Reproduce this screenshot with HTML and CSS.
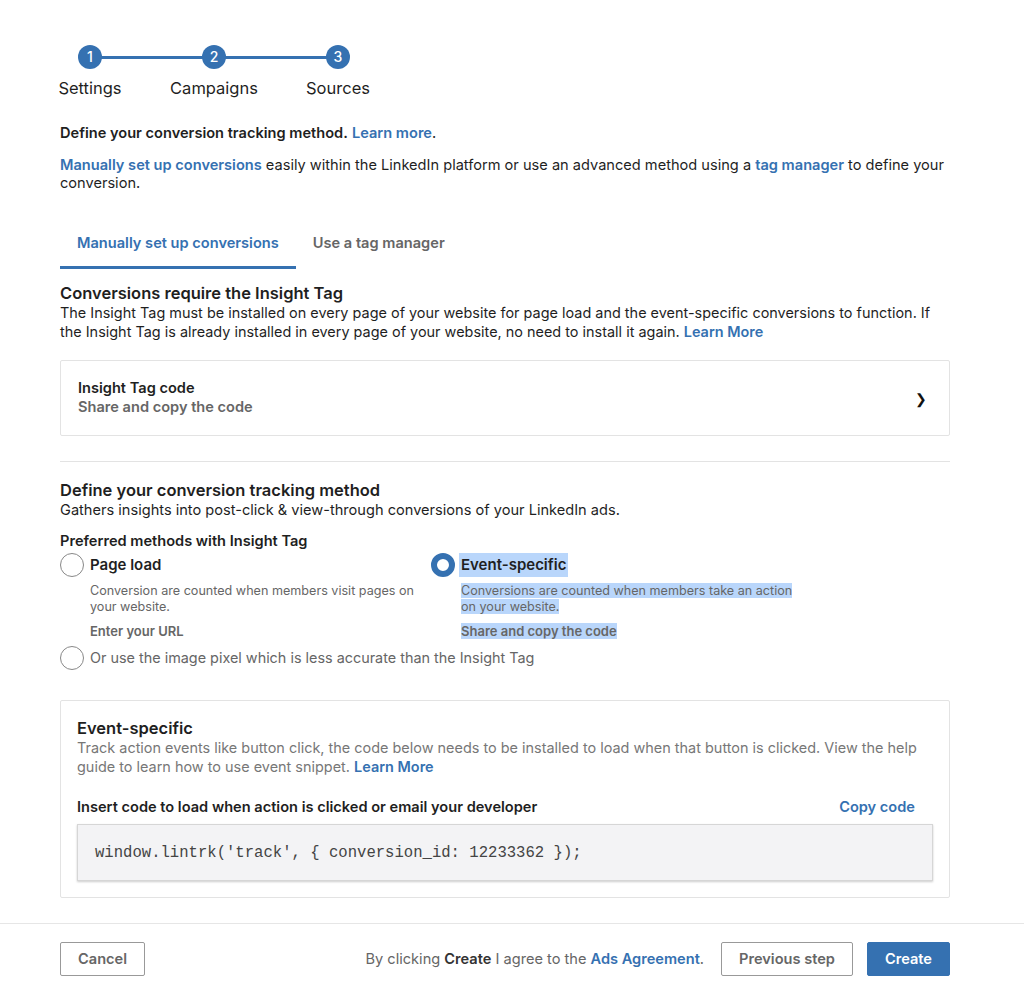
FILE: index.html
```html
<!DOCTYPE html>
<html>

<head>
    <title>Conversion tracking</title>
    <link rel="stylesheet" href="styles.css">
</head>

<body>
    <div class="page">
        <ol class="stepper">
            <li class="step"><span class="step-dot">1</span><span class="step-label">Settings</span></li>
            <li class="step"><span class="step-dot">2</span><span class="step-label">Campaigns</span></li>
            <li class="step"><span class="step-dot">3</span><span class="step-label">Sources</span></li>
        </ol>

        <p class="intro"><strong>Define your conversion tracking method.</strong> <a href="#">Learn more</a>.</p>
        <p class="lead"><a href="#">Manually set up conversions</a> easily within the LinkedIn platform or use an advanced method using a <a href="#">tag manager</a> to define your conversion.</p>

        <div class="tabs">
            <span class="tab active">Manually set up conversions</span>
            <span class="tab">Use a tag manager</span>
        </div>

        <section class="insight">
            <h3>Conversions require the Insight Tag</h3>
            <p class="insight-text">The Insight Tag must be installed on every page of your website for page load and the event-specific conversions to function. If the Insight Tag is already installed in every page of your website, no need to install it again. <a href="#">Learn More</a></p>
        </section>

        <div class="tag-card">
            <div>
                <div class="tag-title">Insight Tag code</div>
                <div class="tag-sub">Share and copy the code</div>
            </div>
            <span class="chevron">&#x276F;</span>
        </div>

        <hr class="divider">

        <section class="method">
            <h3>Define your conversion tracking method</h3>
            <p class="method-text">Gathers insights into post-click &amp; view-through conversions of your LinkedIn ads.</p>
            <div class="method-label">Preferred methods with Insight Tag</div>

            <div class="options">
                <div class="option">
                    <div class="option-head"><span class="radio"></span><span class="option-title">Page load</span></div>
                    <p class="option-desc">Conversion are counted when members visit pages on your website.</p>
                    <div class="option-link">Enter your URL</div>
                </div>
                <div class="option">
                    <div class="option-head"><span class="radio checked"></span><span class="option-title sel">Event-specific</span></div>
                    <p class="option-desc"><span class="sel">Conversions are counted when members take an action on your website.</span></p>
                    <div class="option-link"><span class="sel">Share and copy the code</span></div>
                </div>
            </div>

            <div class="option-head pixel"><span class="radio"></span><span>Or use the image pixel which is less accurate than the Insight Tag</span></div>
        </section>

        <div class="event-card">
            <h3>Event-specific</h3>
            <p class="event-text">Track action events like button click, the code below needs to be installed to load when that button is clicked. View the help guide to learn how to use event snippet. <a href="#">Learn More</a></p>
            <div class="code-head">
                <strong>Insert code to load when action is clicked or email your developer</strong>
                <a href="#">Copy code</a>
            </div>
            <pre class="code">window.lintrk('track', { conversion_id: 12233362 });</pre>
        </div>
    </div>

    <footer class="footer">
        <button class="btn">Cancel</button>
        <span class="agree">By clicking <strong>Create</strong> I agree to the <a href="#">Ads Agreement</a>.</span>
        <button class="btn">Previous step</button>
        <button class="btn primary">Create</button>
    </footer>
</body>

</html>
```

FILE: styles.css
```css
body {
    margin: 0;
    font-family: Inter, "Liberation Sans", Arial, sans-serif;
    font-size: 14.6px;
    color: #1f1f1f;
    background: #fff;
}

a {
    color: #3571b1;
    text-decoration: none;
    font-weight: 600;
}

strong {
    font-weight: 600;
}

p {
    margin: 0;
}

h3 {
    margin: 0;
    font-size: 16.5px;
    font-weight: 600;
    line-height: 20px;
}

.page {
    padding: 45px 74px 0 60px;
}

/* stepper */
.stepper {
    position: relative;
    display: flex;
    list-style: none;
    margin: 0 0 0 -32px;
    padding: 0;
}

.stepper::before {
    content: "";
    position: absolute;
    left: 62px;
    width: 247px;
    top: 11px;
    height: 3px;
    background: #3571b1;
}

.step {
    width: 124px;
    display: flex;
    flex-direction: column;
    align-items: center;
}

.step-dot {
    position: relative;
    width: 24px;
    height: 24px;
    border-radius: 50%;
    background: #3571b1;
    color: #fff;
    font-size: 14px;
    font-weight: 500;
    line-height: 24px;
    text-align: center;
}

.step-label {
    margin-top: 9px;
    font-size: 16.5px;
    line-height: 20px;
}

.intro {
    margin-top: 26px;
    line-height: 18px;
}

.lead {
    margin-top: 14px;
    line-height: 18px;
}

/* tabs */
.tabs {
    display: flex;
    margin-top: 42px;
}

.tab {
    padding: 0 17px 14px;
    border-bottom: 3px solid transparent;
    color: #666;
    font-weight: 600;
    line-height: 18px;
}

.tab.active {
    color: #3571b1;
    border-bottom-color: #3571b1;
}

.insight {
    margin-top: 14px;
}

.insight-text {
    font-size: 14.45px;
    line-height: 19px;
}

.tag-card {
    margin-top: 19px;
    height: 74px;
    padding: 0 22px 0 17px;
    border: 1px solid #e3e3e3;
    border-radius: 2px;
    display: flex;
    align-items: center;
    justify-content: space-between;
}

.tag-title {
    font-weight: 600;
    line-height: 19px;
}

.tag-sub {
    color: #666;
    font-weight: 600;
    line-height: 19px;
}

.chevron {
    font-size: 14px;
    color: #111;
}

.divider {
    margin: 25px 0 0;
    border: 0;
    border-top: 1px solid #e3e3e3;
}

.method {
    margin-top: 18px;
}

.method-text {
    line-height: 20px;
}

.method-label {
    margin-top: 11px;
    font-weight: 600;
    line-height: 20px;
}

.options {
    display: flex;
    margin-top: 2px;
}

.option {
    width: 371px;
}

.option-head {
    display: flex;
    align-items: center;
    gap: 4px;
    line-height: 24px;
}

.radio {
    width: 22px;
    height: 22px;
    border: 1px solid #888;
    border-radius: 50%;
    flex: none;
}

.radio.checked {
    width: 12px;
    height: 12px;
    border: 6px solid #3571b1;
}

.option-title {
    font-size: 15px;
    font-weight: 600;
    padding: 0 2px;
}

.option-desc {
    margin: 6px 0 0 30px;
    font-size: 12.6px;
    line-height: 16px;
    color: #666;
    width: 340px;
}

.option-link {
    margin: 8px 0 0 30px;
    font-size: 13px;
    font-weight: 600;
    color: #666;
    line-height: 16px;
}

.sel {
    background: #b9d6fb;
}

.pixel {
    margin-top: 7px;
    gap: 6px;
    color: #666;
    font-size: 14.4px;
}

/* event card */
.event-card {
    margin-top: 30px;
    border: 1px solid #e3e3e3;
    border-radius: 2px;
    padding: 17px 16px 16px;
}

.event-text {
    font-size: 14.45px;
    color: #777;
    line-height: 19px;
}

.code-head {
    display: flex;
    justify-content: space-between;
    align-items: flex-end;
    margin-top: 22px;
    padding-right: 18px;
    line-height: 18px;
}

.code {
    margin: 8px 0 0;
    background: #f3f3f5;
    border: 1px solid #d6d6d6;
    box-shadow: 0 1px 2px rgba(0, 0, 0, 0.2);
    padding: 19px 17px 18px;
    font-family: "Liberation Mono", "Courier New", monospace;
    font-size: 15.6px;
    line-height: 18px;
    color: #444;
}

/* footer */
.footer {
    margin-top: 25px;
    border-top: 1px solid #e6e6e6;
    padding: 18px 74px 0 60px;
    display: flex;
    align-items: center;
}

.btn {
    height: 34px;
    padding: 0 17px;
    border: 1px solid #999;
    border-radius: 2px;
    background: #fff;
    color: #666;
    font-family: inherit;
    font-size: 14.6px;
    font-weight: 600;
}

.agree {
    margin-left: auto;
    margin-right: 17px;
    color: #666;
}

.agree strong {
    color: #333;
}

.btn.primary {
    margin-left: 14px;
    background: #3571b1;
    border-color: #3571b1;
    color: #fff;
}
```
